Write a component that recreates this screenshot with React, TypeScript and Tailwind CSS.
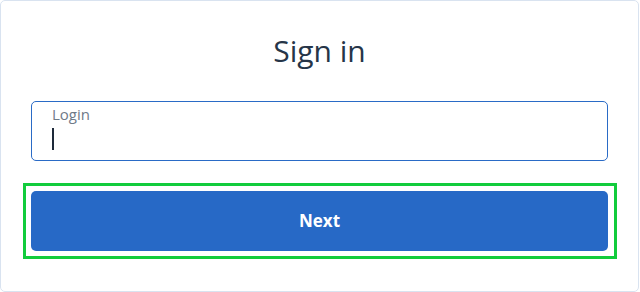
import React from "react";

export default function App() {
  return (
    <div className="w-[640px] h-[292px] bg-white font-['Open_Sans',sans-serif]">
      <div className="w-[639px] h-[292px] border border-[#d9e3f0] rounded-[5px] px-[30px] flex flex-col">
        <h1 className="mt-[28px] h-[44px] text-center text-[30px] leading-[44px] text-[#263548]">
          Sign in
        </h1>
        <div className="mt-[28px] h-[60px] border border-[#2a6bc6] rounded-[5px] pl-[20px] pt-[2px] flex flex-col">
          <label className="text-[15px] leading-[20px] text-[#6f7a88]">Login</label>
          <div className="mt-[4px] w-[1.5px] h-[22px] bg-[#1e2a3a]" />
        </div>
        <div className="mt-[22px] -ml-[8px] -mr-[9px] border-[3px] border-[#12cc3c] py-[5px] pl-[5px] pr-[6px]">
          <button className="h-[60px] w-full rounded-[5px] bg-[#2769c6] text-white text-[17px] font-bold">
            Next
          </button>
        </div>
      </div>
    </div>
  );
}
